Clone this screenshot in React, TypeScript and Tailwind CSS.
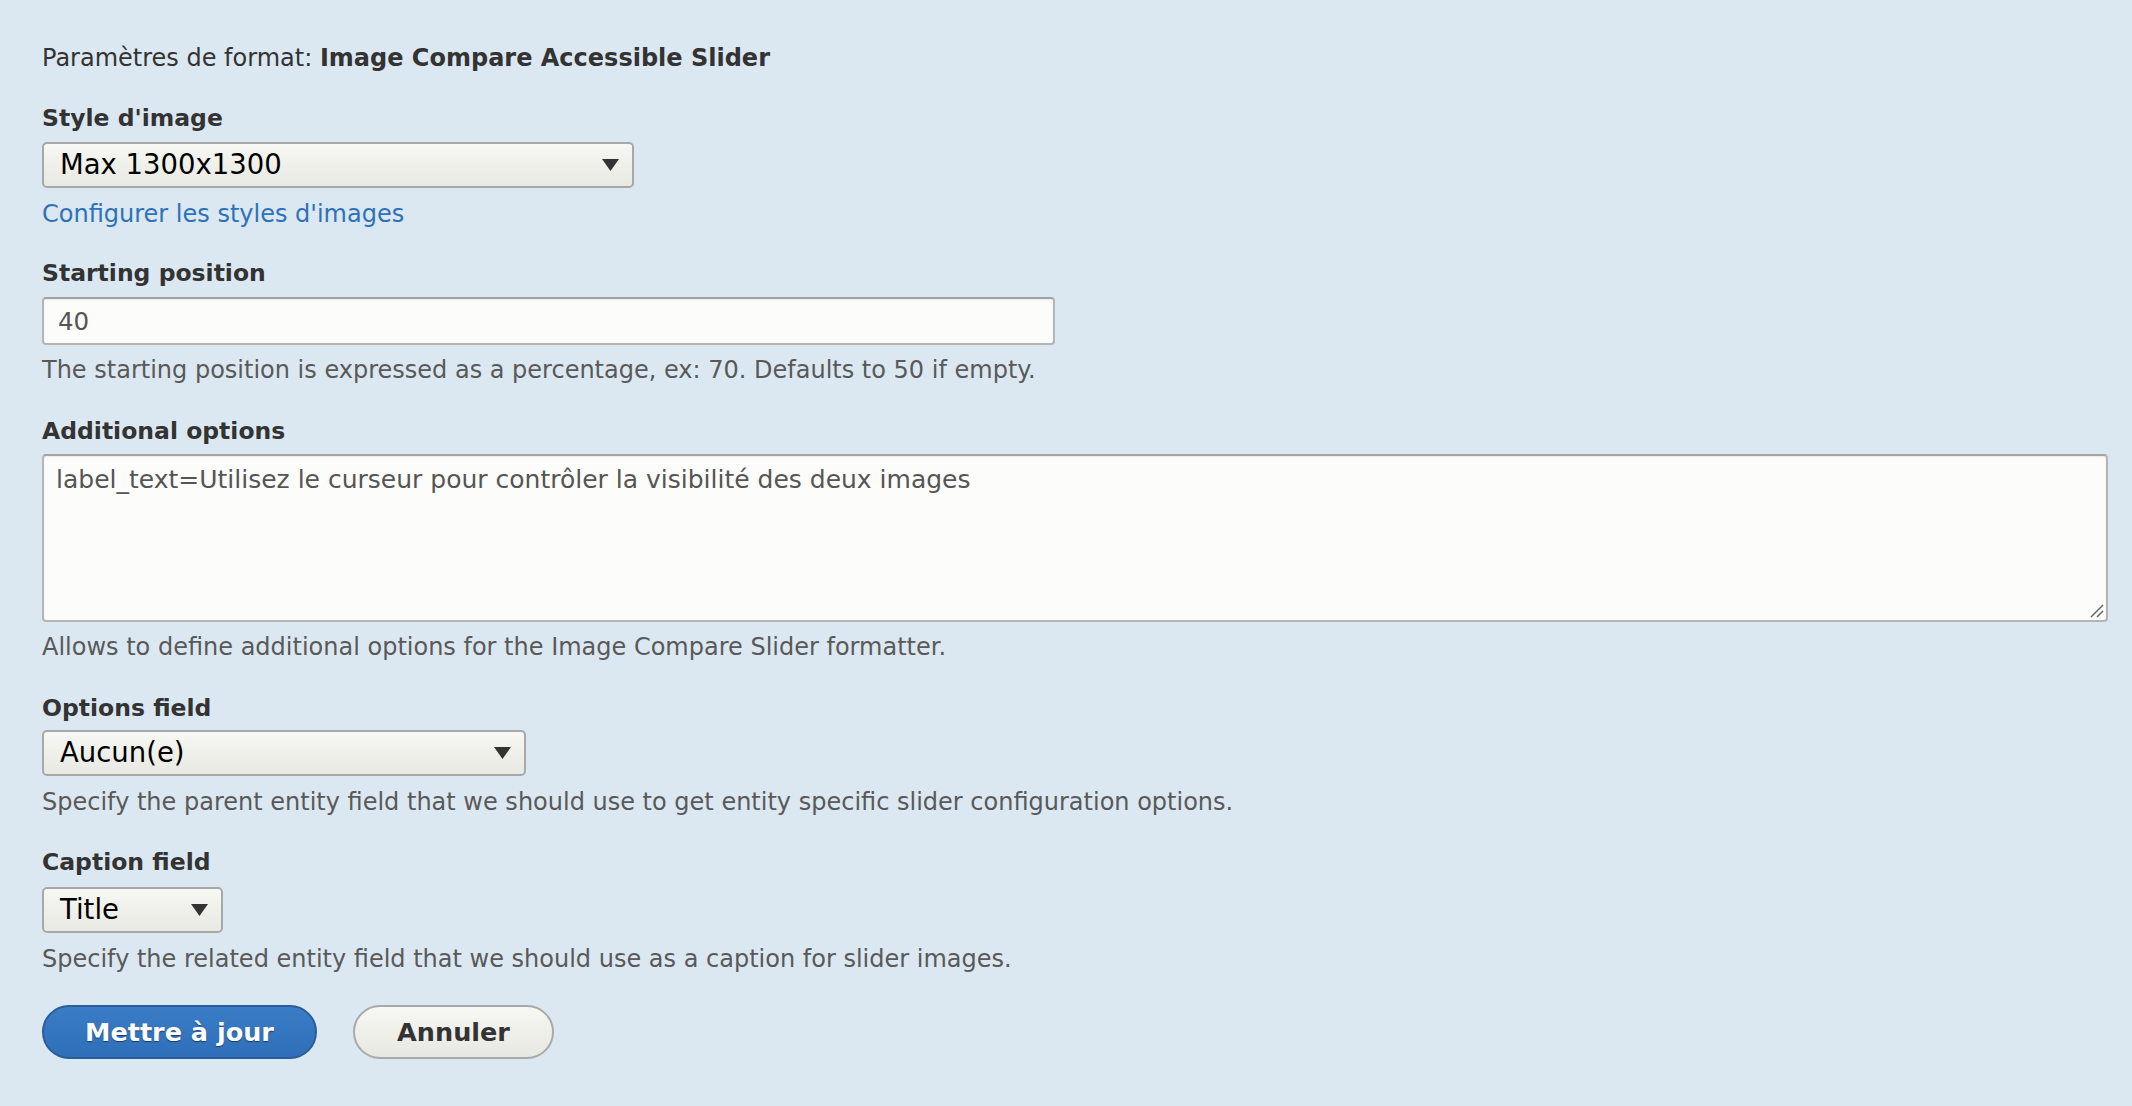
import { useState } from "react";

const FONT = "font-['DejaVu_Sans',sans-serif]";

function SelectBox({ value, width }: { value: string; width: string }) {
  return (
    <div
      className={`${width} h-[46px] flex items-center justify-between pl-[16px] pr-[13px] rounded-[5px] border-2 border-[#a8a8a8] bg-gradient-to-b from-[#f7f7f3] to-[#e9e9e3] text-[27.5px] text-black`}
    >
      <span className="leading-none">{value}</span>
      <svg width="17" height="12" viewBox="0 0 17 12" className="shrink-0">
        <path d="M0 0 H17 L8.5 12 Z" fill="#333" />
      </svg>
    </div>
  );
}

function Label({ children, className = "" }: { children: React.ReactNode; className?: string }) {
  return <div className={`h-[32px] leading-[32px] text-[23.5px] font-bold text-[#333] ${className}`}>{children}</div>;
}

function Description({ children, className = "" }: { children: React.ReactNode; className?: string }) {
  return <div className={`h-[32px] leading-[32px] text-[24px] text-[#595959] ${className}`}>{children}</div>;
}

export default function App() {
  const [start, setStart] = useState("40");

  return (
    <div className={`min-h-[1106px] w-full bg-[#dbe8f1] pl-[42px] pr-[24px] pt-[42px] ${FONT}`}>
      <div className="h-[32px] leading-[32px] text-[24px] text-[#333]">
        Paramètres de format: <span className="font-bold">Image Compare Accessible Slider</span>
      </div>

      <Label className="mt-[28px]">Style d'image</Label>
      <div className="mt-[8px]">
        <SelectBox value="Max 1300x1300" width="w-[592px]" />
      </div>
      <div className="mt-[10px] h-[32px] leading-[32px] text-[24px]">
        <a href="#" className="text-[#2d72b9]">
          Configurer les styles d'images
        </a>
      </div>

      <Label className="mt-[27px]">Starting position</Label>
      <input
        value={start}
        onChange={(e) => setStart(e.target.value)}
        className="mt-[8px] block w-[1013px] h-[48px] px-[14px] rounded-[4px] border-2 border-[#b5b5b5] border-t-[#a3a3a3] bg-[#fcfcfa] shadow-[inset_0_1px_2px_rgba(0,0,0,0.08)] text-[24.5px] text-[#555] outline-none"
      />
      <Description className="mt-[9px]">
        The starting position is expressed as a percentage, ex: 70. Defaults to 50 if empty.
      </Description>

      <Label className="mt-[29px]">Additional options</Label>
      <div className="relative mt-[7px] w-[2066px] h-[168px] rounded-[4px] border-2 border-[#b5b5b5] border-t-[#a3a3a3] bg-[#fcfcfa] shadow-[inset_0_1px_2px_rgba(0,0,0,0.08)] px-[12px] pt-[8px]">
        <div className="text-[25px] leading-[32px] text-[#555]">
          label_text=Utilisez le curseur pour contrôler la visibilité des deux images
        </div>
        <svg width="14" height="14" viewBox="0 0 14 14" className="absolute right-[2px] bottom-[2px]">
          <path d="M1 13 L13 1 M7 13 L13 7" stroke="#666" strokeWidth="1.5" />
        </svg>
      </div>
      <Description className="mt-[9px]">
        Allows to define additional options for the Image Compare Slider formatter.
      </Description>

      <Label className="mt-[29px]">Options field</Label>
      <div className="mt-[6px]">
        <SelectBox value="Aucun(e)" width="w-[484px]" />
      </div>
      <Description className="mt-[10px]">
        Specify the parent entity field that we should use to get entity specific slider configuration options.
      </Description>

      <Label className="mt-[28px]">Caption field</Label>
      <div className="mt-[9px]">
        <SelectBox value="Title" width="w-[181px]" />
      </div>
      <Description className="mt-[10px]">
        Specify the related entity field that we should use as a caption for slider images.
      </Description>

      <div className="mt-[30px] flex items-center gap-[36px]">
        <button className="h-[54px] w-[275px] rounded-full border-2 border-[#2b5d9a] bg-gradient-to-b from-[#3a7cc6] to-[#2f6fba] text-[25.5px] font-bold text-white [text-shadow:0_1px_1px_rgba(0,0,0,0.5)]">
          Mettre à jour
        </button>
        <button className="h-[54px] w-[201px] rounded-full border-2 border-[#a9a9a9] bg-gradient-to-b from-[#f7f7f3] to-[#e8e8e2] text-[25.5px] font-bold text-[#333]">
          Annuler
        </button>
      </div>
    </div>
  );
}
